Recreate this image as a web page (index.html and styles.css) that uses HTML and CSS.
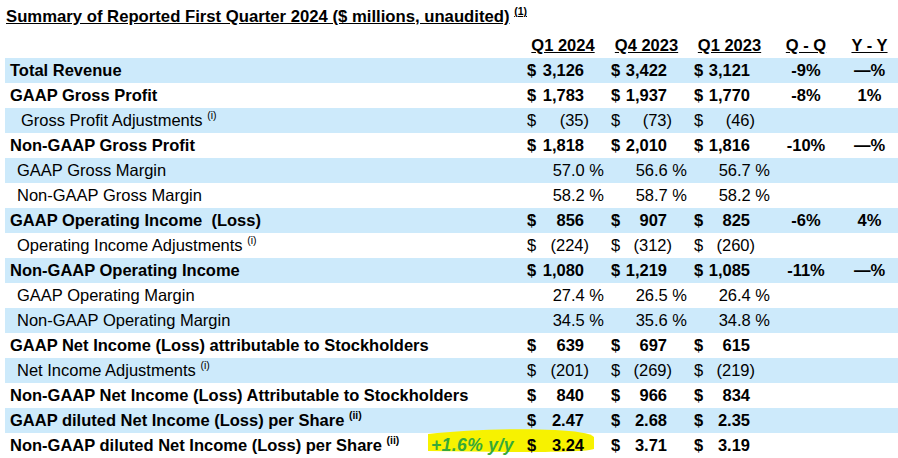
FILE: index.html
```html
<!DOCTYPE html>
<html>
<head>
<meta charset="utf-8">
<link rel="stylesheet" href="styles.css">
</head>
<body>
<div class="sheet">
  <h1 class="title"><span class="ul">Summary of Reported First Quarter 2024 ($ millions, unaudited)</span> <sup class="fn ul">(1)</sup></h1>

  <div class="row head bold">
    <div></div>
    <div class="h"><span>Q1 2024</span></div>
    <div class="h"><span>Q4 2023</span></div>
    <div class="h"><span>Q1 2023</span></div>
    <div class="h"><span>Q - Q</span></div>
    <div class="h"><span>Y - Y</span></div>
  </div>

  <div class="row alt bold">
    <div class="lbl">Total Revenue</div>
    <div class="m"><span>$</span><span>3,126</span></div>
    <div class="m"><span>$</span><span>3,422</span></div>
    <div class="m"><span>$</span><span>3,121</span></div>
    <div class="c">-9%</div>
    <div class="c">—%</div>
  </div>

  <div class="row bold">
    <div class="lbl">GAAP Gross Profit</div>
    <div class="m"><span>$</span><span>1,783</span></div>
    <div class="m"><span>$</span><span>1,937</span></div>
    <div class="m"><span>$</span><span>1,770</span></div>
    <div class="c">-8%</div>
    <div class="c">1%</div>
  </div>

  <div class="row alt">
    <div class="lbl ind2">Gross Profit Adjustments <sup class="fn">(i)</sup></div>
    <div class="m p"><span>$</span><span>(35)</span></div>
    <div class="m p"><span>$</span><span>(73)</span></div>
    <div class="m p"><span>$</span><span>(46)</span></div>
    <div></div>
    <div></div>
  </div>

  <div class="row bold">
    <div class="lbl">Non-GAAP Gross Profit</div>
    <div class="m"><span>$</span><span>1,818</span></div>
    <div class="m"><span>$</span><span>2,010</span></div>
    <div class="m"><span>$</span><span>1,816</span></div>
    <div class="c">-10%</div>
    <div class="c">—%</div>
  </div>

  <div class="row alt">
    <div class="lbl ind">GAAP Gross Margin</div>
    <div class="m pc"><span>57.0 %</span></div>
    <div class="m pc"><span>56.6 %</span></div>
    <div class="m pc"><span>56.7 %</span></div>
    <div></div>
    <div></div>
  </div>

  <div class="row">
    <div class="lbl ind">Non-GAAP Gross Margin</div>
    <div class="m pc"><span>58.2 %</span></div>
    <div class="m pc"><span>58.7 %</span></div>
    <div class="m pc"><span>58.2 %</span></div>
    <div></div>
    <div></div>
  </div>

  <div class="row alt bold">
    <div class="lbl">GAAP Operating Income&nbsp; (Loss)</div>
    <div class="m"><span>$</span><span>856</span></div>
    <div class="m"><span>$</span><span>907</span></div>
    <div class="m"><span>$</span><span>825</span></div>
    <div class="c">-6%</div>
    <div class="c">4%</div>
  </div>

  <div class="row">
    <div class="lbl ind">Operating Income Adjustments <sup class="fn">(i)</sup></div>
    <div class="m p"><span>$</span><span>(224)</span></div>
    <div class="m p"><span>$</span><span>(312)</span></div>
    <div class="m p"><span>$</span><span>(260)</span></div>
    <div></div>
    <div></div>
  </div>

  <div class="row alt bold">
    <div class="lbl">Non-GAAP Operating Income</div>
    <div class="m"><span>$</span><span>1,080</span></div>
    <div class="m"><span>$</span><span>1,219</span></div>
    <div class="m"><span>$</span><span>1,085</span></div>
    <div class="c">-11%</div>
    <div class="c">—%</div>
  </div>

  <div class="row">
    <div class="lbl ind">GAAP Operating Margin</div>
    <div class="m pc"><span>27.4 %</span></div>
    <div class="m pc"><span>26.5 %</span></div>
    <div class="m pc"><span>26.4 %</span></div>
    <div></div>
    <div></div>
  </div>

  <div class="row alt">
    <div class="lbl ind">Non-GAAP Operating Margin</div>
    <div class="m pc"><span>34.5 %</span></div>
    <div class="m pc"><span>35.6 %</span></div>
    <div class="m pc"><span>34.8 %</span></div>
    <div></div>
    <div></div>
  </div>

  <div class="row bold">
    <div class="lbl">GAAP Net Income (Loss) attributable to Stockholders</div>
    <div class="m"><span>$</span><span>639</span></div>
    <div class="m"><span>$</span><span>697</span></div>
    <div class="m"><span>$</span><span>615</span></div>
    <div></div>
    <div></div>
  </div>

  <div class="row alt">
    <div class="lbl ind">Net Income Adjustments <sup class="fn">(i)</sup></div>
    <div class="m p"><span>$</span><span>(201)</span></div>
    <div class="m p"><span>$</span><span>(269)</span></div>
    <div class="m p"><span>$</span><span>(219)</span></div>
    <div></div>
    <div></div>
  </div>

  <div class="row bold">
    <div class="lbl">Non-GAAP Net Income (Loss) Attributable to Stockholders</div>
    <div class="m"><span>$</span><span>840</span></div>
    <div class="m"><span>$</span><span>966</span></div>
    <div class="m"><span>$</span><span>834</span></div>
    <div></div>
    <div></div>
  </div>

  <div class="row alt bold">
    <div class="lbl">GAAP diluted Net Income (Loss) per Share <sup class="fn">(ii)</sup></div>
    <div class="m"><span>$</span><span>2.47</span></div>
    <div class="m"><span>$</span><span>2.68</span></div>
    <div class="m"><span>$</span><span>2.35</span></div>
    <div></div>
    <div></div>
  </div>

  <div class="row bold last">
    <svg class="marker" width="172" height="26" viewBox="0 0 172 26"><path d="M3,6 C40,2 90,0 130,2 C150,3 165,5 169,9 L169,21 C160,24 120,24 90,24 L3,23 Z" fill="#f7f200"/></svg>
    <span class="note">+1.6% y/y</span>
    <div class="lbl">Non-GAAP diluted Net Income (Loss) per Share <sup class="fn">(ii)</sup></div>
    <div class="m"><span>$</span><span>3.24</span></div>
    <div class="m"><span>$</span><span>3.71</span></div>
    <div class="m"><span>$</span><span>3.19</span></div>
    <div></div>
    <div></div>
  </div>
</div>
</body>
</html>
```

FILE: styles.css
```css
body {
  margin: 0;
  background: #fff;
  color: #000;
  font-family: "Liberation Sans", Arial, sans-serif;
}

.sheet {
  padding: 4px 0 0 5px;
}

.title {
  margin: 0 0 4px 1px;
  font-size: 16.7px;
  line-height: 25px;
  font-weight: bold;
  white-space: nowrap;
}

.ul {
  text-decoration: underline;
}

.fn {
  font-size: 10.5px;
  line-height: 0;
  vertical-align: 7px;
}

.row {
  display: grid;
  grid-template-columns: 516px 84px 83px 83px 70px 57px;
  height: 25px;
  line-height: 25px;
  font-size: 16.5px;
  white-space: nowrap;
}

.alt {
  background: #cdeafb;
}

.bold {
  font-weight: bold;
}

.lbl {
  padding-left: 5px;
}

.ind {
  padding-left: 12px;
}

.ind2 {
  padding-left: 16px;
}

.h {
  text-align: center;
}

.h span {
  text-decoration: underline;
}

.m {
  display: flex;
  justify-content: space-between;
  padding-left: 6px;
  padding-right: 21px;
}

.m.p {
  padding-right: 16px;
}

.m.pc {
  justify-content: flex-end;
  padding-right: 1px;
}

.c {
  text-align: center;
}

.last {
  position: relative;
  z-index: 0;
}

.marker {
  position: absolute;
  left: 420px;
  top: -5px;
  z-index: -1;
}

.note {
  position: absolute;
  left: 426px;
  top: 0;
  font-size: 17.5px;
  font-style: italic;
  font-weight: bold;
  letter-spacing: 0.4px;
  color: #36a93a;
}
```
